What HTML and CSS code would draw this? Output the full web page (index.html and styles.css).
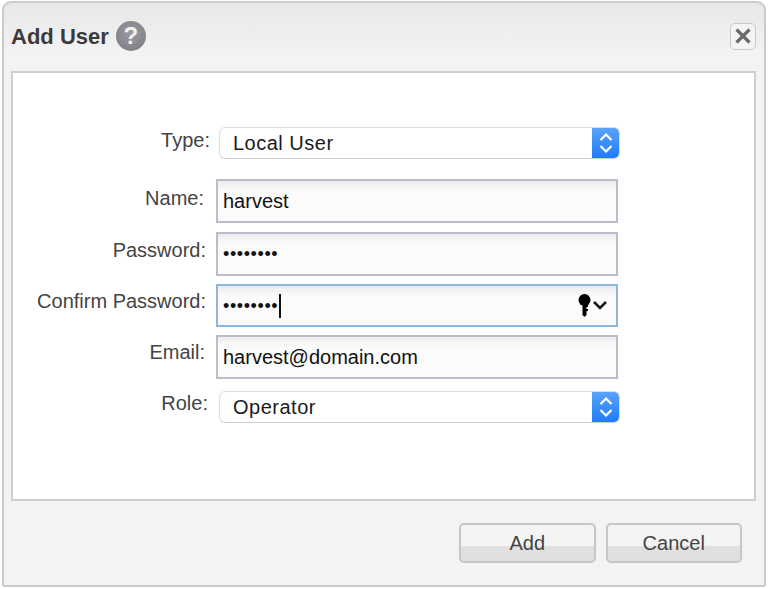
FILE: index.html
```html
<!DOCTYPE html>
<html lang="en">
<head>
    <meta charset="UTF-8">
    <title>Add User</title>
    <link rel="stylesheet" href="styles.css">
</head>
<body>
    <div class="dialog">
        <div class="dialog-header">
            <h1>Add User</h1>
            <div class="help-icon">?</div>
            <button class="close-button">
                <svg width="18" height="18" viewBox="0 0 18 18"><path d="M2.500 2.500 L15.500 15.500 M15.500 2.500 L2.500 15.500" stroke="#6b6b6b" stroke-width="3.200" fill="none"/></svg>
            </button>
        </div>

        <div class="panel">
            <div class="form-row select-row first-row">
                <label>Type:</label>
                <div class="select">
                    <span class="select-value">Local User</span>
                    <span class="select-arrows">
                        <svg width="16" height="24" viewBox="0 0 16 24"><path d="M2.500 9 L8 3.500 L13.500 9 M2.500 15 L8 20.500 L13.500 15" stroke="#fff" stroke-width="2.200" fill="none"/></svg>
                    </span>
                </div>
            </div>

            <div class="form-row name-row">
                <label class="name-label">Name:</label>
                <div class="text-input">harvest</div>
            </div>
            <div class="form-row">
                <label>Password:</label>
                <div class="text-input dots">••••••••</div>
            </div>
            <div class="form-row">
                <label>Confirm Password:</label>
                <div class="text-input focused">
                    <span class="dots">••••••••</span><span class="caret"></span>
                    <svg class="key-icon" width="30" height="23" viewBox="0 0 30 23">
                        <circle cx="6.500" cy="6" r="6" fill="#000"/>
                        <path d="M4.500 9 H8.500 V11 H10 V13 H8.500 V15 H10 V17 H8.500 V21 L6.500 23 L4.500 21 Z" fill="#000"/>
                        <path d="M16 8 L22 14 L28 8" stroke="#111" stroke-width="2.500" fill="none"/>
                    </svg>
                </div>
            </div>
            <div class="form-row">
                <label class="email-label">Email:</label>
                <div class="text-input">harvest@domain.com</div>
            </div>

            <div class="form-row select-row last-row">
                <label class="role-label">Role:</label>
                <div class="select">
                    <span class="select-value">Operator</span>
                    <span class="select-arrows">
                        <svg width="16" height="24" viewBox="0 0 16 24"><path d="M2.500 9 L8 3.500 L13.500 9 M2.500 15 L8 20.500 L13.500 15" stroke="#fff" stroke-width="2.200" fill="none"/></svg>
                    </span>
                </div>
            </div>
        </div>

        <div class="dialog-footer">
            <button class="footer-button">Add</button>
            <button class="footer-button">Cancel</button>
        </div>
    </div>
</body>
</html>
```

FILE: styles.css
```css
html, body {
    height: 100%;
}
body {
    font-family: "Liberation Sans", Arial, sans-serif;
    margin: 0;
    padding: 1px 2px 2px;
    box-sizing: border-box;
    background-color: white;
    overflow: hidden;
}
.dialog {
    height: 586px;
    box-sizing: border-box;
    border: 2px solid #cbcbcb;
    border-radius: 9px 9px 3px 3px;
    background: linear-gradient(#e7e7e7, #f3f3f3 50px);
    padding: 0 8px 0 7px;
}
.dialog-header {
    display: flex;
    align-items: center;
    height: 68px;
}
h1 {
    font-size: 22px;
    font-weight: bold;
    color: #3a3a3a;
    margin: 0;
}
.help-icon {
    width: 30px;
    height: 30px;
    margin-left: 7px;
    margin-bottom: 2px;
    border-radius: 50%;
    background: radial-gradient(circle at 50% 40%, #9c9ca2, #77777d);
    color: #f2f2f2;
    font-size: 24px;
    font-weight: bold;
    line-height: 30px;
    text-align: center;
}
.close-button {
    width: 26px;
    height: 27px;
    margin-left: auto;
    margin-bottom: 2px;
    padding: 0;
    border: 1px solid #c8c8c8;
    border-radius: 5px;
    background-color: #f4f4f4;
    display: flex;
    align-items: center;
    justify-content: center;
}
.panel {
    height: 430px;
    box-sizing: border-box;
    border: 2px solid #cfcfcf;
    background-color: white;
    padding-top: 54px;
}
.form-row {
    display: flex;
    align-items: center;
    margin-bottom: 8px;
}
.form-row label {
    width: 193px;
    flex-shrink: 0;
    margin-right: 10px;
    padding-bottom: 8px;
    box-sizing: border-box;
    text-align: right;
    font-size: 20px;
    color: #444;
}
.form-row .name-label {
    width: 191px;
    margin-right: 12px;
    padding-bottom: 6px;
}
.form-row .email-label {
    width: 192px;
    margin-right: 11px;
    padding-bottom: 10px;
}
.first-row {
    margin-bottom: 20px;
}
.name-row {
    margin-bottom: 9px;
}
.last-row {
    margin-top: 12px;
}
.form-row.select-row label {
    width: 197px;
    margin-right: 9px;
    padding-bottom: 6px;
}
.form-row.select-row .role-label {
    width: 195px;
    margin-right: 11px;
    padding-bottom: 8px;
}
.select {
    width: 401px;
    height: 32px;
    box-sizing: border-box;
    display: flex;
    border: 1px solid #dedede;
    border-bottom-color: #cfcfcf;
    border-radius: 6px;
    background-color: white;
    overflow: hidden;
}
.select-value {
    flex: 1;
    padding-left: 13px;
    font-size: 20px;
    line-height: 30px;
    letter-spacing: 0.5px;
    color: #1a1a1a;
}
.select-arrows {
    width: 27px;
    display: flex;
    align-items: center;
    justify-content: center;
    background: linear-gradient(#5aa2fb, #1f7cf8);
}
.text-input {
    width: 402px;
    height: 44px;
    box-sizing: border-box;
    border: 2px solid #bcbccb;
    background: linear-gradient(#ececec, #fbfbfb 10px);
    padding-left: 5px;
    font-size: 20px;
    line-height: 40px;
    color: #111;
}
.text-input.focused {
    height: 43px;
    display: flex;
    align-items: center;
    border-color: #8db8dd;
}
.dots {
    letter-spacing: 0.6px;
    font-size: 18px;
}
.caret {
    width: 2px;
    height: 24px;
    margin-left: 1px;
    background-color: #111;
}
.key-icon {
    margin-left: auto;
    margin-right: 8px;
}
.dialog-footer {
    display: flex;
    justify-content: flex-end;
    gap: 10px;
    padding: 22px 14px 0 0;
}
.footer-button {
    width: 136.5px;
    height: 40px;
    border: 2px solid #c6c6c6;
    border-radius: 5px;
    background: linear-gradient(#f4f4f4 57%, #e0e0e0 57%);
    font-family: inherit;
    font-size: 20px;
    color: #444;
    padding: 0;
}
```
